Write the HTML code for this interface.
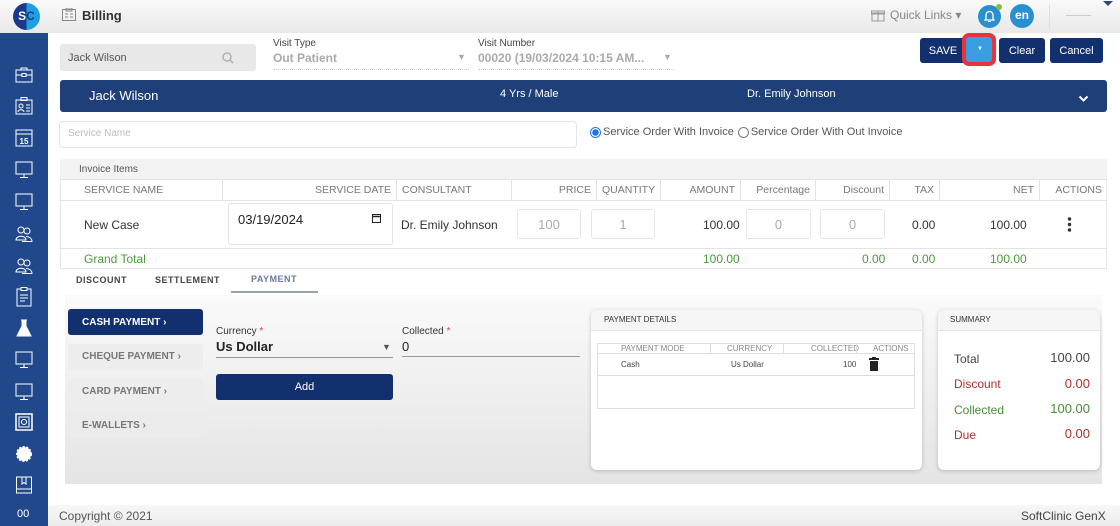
<!DOCTYPE html>
<html><head><meta charset="utf-8">
<style>
*{box-sizing:border-box;margin:0;padding:0}
body{width:1120px;height:526px;overflow:hidden;background:#fff;font-family:"Liberation Sans",sans-serif;position:relative;color:#333}
.a{position:absolute}
.t{position:absolute;white-space:nowrap}
.btn{position:absolute;background:#13306e;color:#fff;font-size:11px;border-radius:3px;display:flex;align-items:center;justify-content:center}
.inp{position:absolute;border:1px solid #e6e6e6;border-radius:3px;background:#fff;color:#aaa;font-size:13px;display:flex;align-items:center;justify-content:center}
.th{position:absolute;top:180px;height:20px;font-size:10.5px;color:#777;line-height:20px;border-right:1px solid #e3e3e3;padding:0 5px;overflow:hidden}
.side svg{position:absolute;left:15px}
</style></head><body>
<div class="a" style="left:0;top:0;width:1120px;height:33px;background:linear-gradient(#fafafa,#e8e8e8)"></div>
<div class="a" style="left:13px;top:3px;width:27px;height:27px;border-radius:50%;background:linear-gradient(90deg,#1a3a8a 50%,#1ea0e0 50%);color:#fff;font-weight:bold;font-size:12px;text-align:center;line-height:27px"><span style="color:#fff">S</span><span style="color:#1a3a8a">C</span></div>
<svg class="a" style="left:62px;top:8px" width="14" height="13" viewBox="0 0 14 13"><rect x="0.5" y="1.5" width="13" height="11" fill="none" stroke="#888"/><rect x="4" y="0" width="6" height="3" fill="none" stroke="#888"/><path d="M3 6h3M3 9h3M8 6h3M8 9h3" stroke="#888"/></svg>
<div class="t" style="left:82px;top:8px;font-size:13px;font-weight:bold;color:#333">Billing</div>
<svg class="a" style="left:871px;top:8px" width="14" height="14" viewBox="0 0 14 14"><rect x="1" y="5" width="12" height="8" fill="none" stroke="#999"/><rect x="0.5" y="3" width="13" height="3" fill="none" stroke="#999"/><path d="M7 3v10" stroke="#999"/></svg>
<div class="t" style="left:890px;top:8px;font-size:12px;color:#888">Quick Links ▾</div>
<div class="a" style="left:978px;top:5px;width:23px;height:23px;border-radius:50%;background:#2a8fd0"></div>
<svg class="a" style="left:984px;top:10px" width="11" height="13" viewBox="0 0 11 13"><path d="M2 9V5a3.5 3.5 0 0 1 7 0v4l1 1H1z" fill="none" stroke="#fff" stroke-width="1.3"/><path d="M4 11.5h3" stroke="#fff"/></svg>
<div class="a" style="left:996px;top:4px;width:6px;height:6px;border-radius:50%;background:#7ac143"></div>
<div class="a" style="left:1010px;top:4px;width:24px;height:24px;border-radius:50%;background:#2a8fd0;color:#fff;font-size:12px;font-weight:bold;text-align:center;line-height:23px">en</div>
<div class="a" style="left:1049px;top:5px;width:1px;height:23px;background:#ddd"></div>
<div class="a" style="left:1066px;top:15px;width:25px;height:1px;background:#ccc"></div>
<div class="a" style="left:1103px;top:1px;width:0;height:0;border-left:5px solid transparent;border-right:5px solid transparent;border-top:5px solid #2b4a80"></div>
<div class="a side" style="left:0;top:33px;width:48px;height:493px;background:#22488c">
<svg style="top:34px" width="18" height="16" viewBox="0 0 18 16"><rect x="1" y="3" width="16" height="12" fill="none" stroke="#fff"/><path d="M6 3V1h6v2M1 8h16" stroke="#fff" fill="none"/><rect x="7" y="6.5" width="4" height="3" fill="#22488c" stroke="#fff"/></svg>
<svg style="top:64px" width="18" height="18" viewBox="0 0 18 18"><rect x="1" y="3" width="16" height="14" fill="none" stroke="#fff"/><rect x="6" y="0.5" width="6" height="3" fill="none" stroke="#fff"/><circle cx="6" cy="9" r="2" fill="none" stroke="#fff"/><path d="M3 15c0-3 6-3 6 0M11 8h4M11 11h4M11 14h4" stroke="#fff" fill="none"/></svg>
<svg style="top:96px" width="18" height="18" viewBox="0 0 18 18"><rect x="1" y="1" width="16" height="16" fill="none" stroke="#fff"/><path d="M1 5h16" stroke="#fff"/><text x="9" y="15" fill="#fff" font-size="8" text-anchor="middle" font-family="Liberation Sans" font-weight="bold">15</text></svg>
<svg style="top:128px" width="18" height="18" viewBox="0 0 18 18"><rect x="1" y="1" width="16" height="12" fill="none" stroke="#fff"/><path d="M9 13v3M5 16.5h8" stroke="#fff"/></svg>
<svg style="top:160px" width="18" height="18" viewBox="0 0 18 18"><rect x="1" y="1" width="16" height="12" fill="none" stroke="#fff"/><path d="M9 13v3M5 16.5h8" stroke="#fff"/></svg>
<svg style="top:192px" width="18" height="18" viewBox="0 0 18 18"><circle cx="6" cy="5" r="3" fill="none" stroke="#fff"/><circle cx="12" cy="6" r="3" fill="none" stroke="#fff"/><path d="M1 15c0-5 10-5 10 0zM7 16.5h10c0-4-4-5-6-5" fill="none" stroke="#fff"/></svg>
<svg style="top:224px" width="18" height="18" viewBox="0 0 18 18"><circle cx="6" cy="5" r="3" fill="none" stroke="#fff"/><circle cx="12" cy="6" r="3" fill="none" stroke="#fff"/><path d="M1 15c0-5 10-5 10 0zM7 16.5h10c0-4-4-5-6-5" fill="none" stroke="#fff"/></svg>
<svg style="top:254px" width="18" height="20" viewBox="0 0 18 20"><rect x="2" y="2" width="14" height="17" fill="none" stroke="#fff"/><rect x="6" y="0.5" width="6" height="3" fill="#22488c" stroke="#fff"/><path d="M5 8h8M5 11h8M5 14h5" stroke="#fff"/></svg>
<svg style="top:286px" width="18" height="18" viewBox="0 0 18 18"><path d="M6 1h6M7 1v6L2 17h14L11 7V1" fill="#fff" stroke="#fff"/></svg>
<svg style="top:318px" width="18" height="18" viewBox="0 0 18 18"><rect x="1" y="1" width="16" height="12" fill="none" stroke="#fff"/><path d="M9 13v3M5 16.5h8" stroke="#fff"/></svg>
<svg style="top:350px" width="18" height="18" viewBox="0 0 18 18"><rect x="1" y="1" width="16" height="12" fill="none" stroke="#fff"/><path d="M9 13v3M5 16.5h8" stroke="#fff"/></svg>
<svg style="top:380px" width="18" height="18" viewBox="0 0 18 18"><rect x="1" y="1" width="16" height="16" fill="none" stroke="#fff" stroke-width="1.5"/><rect x="4" y="4" width="10" height="10" fill="none" stroke="#fff"/><circle cx="9" cy="9" r="2.5" fill="none" stroke="#fff"/></svg>
<svg style="top:412px" width="18" height="18" viewBox="0 0 18 18"><circle cx="9" cy="9" r="7" fill="#fff" stroke="#fff" stroke-width="2" stroke-dasharray="2 1.5"/></svg>
<svg style="top:443px" width="18" height="18" viewBox="0 0 18 18"><rect x="1.5" y="1" width="15" height="16" fill="none" stroke="#fff"/><path d="M1.5 13h15M7 1v7l2-1.5 2 1.5V1" fill="none" stroke="#fff"/></svg>
<div class="t" style="left:17px;top:475px;color:#fff;font-size:11px">00</div>
</div>
<div class="a" style="left:60px;top:44px;width:196px;height:27px;background:#e8e8e8;border-radius:3px"></div>
<div class="t" style="left:68px;top:52px;font-size:11px;color:#555">Jack Wilson</div>
<svg class="a" style="left:222px;top:52px" width="12" height="12" viewBox="0 0 12 12"><circle cx="5" cy="5" r="4" fill="none" stroke="#aaa" stroke-width="1.3"/><path d="M8 8l3 3" stroke="#aaa" stroke-width="1.3"/></svg>
<div class="t" style="left:273px;top:38px;font-size:10px;color:#444">Visit Type</div>
<div class="t" style="left:273px;top:51px;font-size:12px;font-weight:bold;color:#aaa">Out Patient</div>
<div class="t" style="left:457px;top:52px;font-size:9px;color:#aaa">▼</div>
<div class="a" style="left:273px;top:69px;width:196px;border-top:1px dotted #ccc"></div>
<div class="t" style="left:478px;top:38px;font-size:10px;color:#444">Visit Number</div>
<div class="t" style="left:478px;top:51px;font-size:12px;font-weight:bold;color:#aaa">00020 (19/03/2024 10:15 AM...</div>
<div class="t" style="left:663px;top:52px;font-size:9px;color:#aaa">▼</div>
<div class="a" style="left:478px;top:69px;width:196px;border-top:1px dotted #ccc"></div>
<div class="btn" style="left:920px;top:38px;width:46px;height:25px">SAVE</div>
<div class="a" style="left:962px;top:33px;width:34px;height:33px;border:4px solid #e8333a;border-radius:7px;background:#3a9de0"></div>
<div class="t" style="left:977px;top:46px;font-size:6px;color:#fff">▼</div>
<div class="btn" style="left:999px;top:38px;width:46px;height:25px">Clear</div>
<div class="btn" style="left:1050px;top:38px;width:53px;height:25px">Cancel</div>
<div class="a" style="left:60px;top:80px;width:1047px;height:32px;background:#1f3f78;border-radius:3px"></div>
<div class="t" style="left:89px;top:88px;font-size:13px;color:#fff">Jack Wilson</div>
<div class="t" style="left:500px;top:88px;font-size:11px;color:#fff">4 Yrs / Male</div>
<div class="t" style="left:747px;top:88px;font-size:11px;color:#fff">Dr. Emily Johnson</div>
<svg class="a" style="left:1078px;top:95px" width="11" height="8" viewBox="0 0 11 8"><path d="M1.5 1.5l4 4 4-4" fill="none" stroke="#fff" stroke-width="2"/></svg>
<div class="a" style="left:59px;top:121px;width:518px;height:27px;border:1px solid #e3e3e3;border-radius:4px"></div>
<div class="t" style="left:68px;top:128px;font-size:10px;color:#bbb">Service Name</div>
<div class="t" style="left:590px;top:126px;font-size:11px;color:#555;display:flex;align-items:center;gap:2px">
<span style="display:inline-block;width:11px;height:11px;border-radius:50%;border:1px solid #1a73e8;background:radial-gradient(#1a73e8 3px,#fff 3.5px)"></span>Service Order With Invoice
<span style="display:inline-block;width:11px;height:11px;border-radius:50%;border:1px solid #777;margin-left:2px"></span>Service Order With Out Invoice</div>
<div class="a" style="left:60px;top:159px;width:1047px;height:110px;border:1px solid #e6e6e6"></div>
<div class="a" style="left:60px;top:159px;width:1047px;height:21px;background:#f3f3f3;border-bottom:1px solid #e3e3e3"></div>
<div class="t" style="left:79px;top:164px;font-size:10px;color:#555">Invoice Items</div>
<div class="a" style="left:60px;top:200px;width:1047px;border-top:1px solid #e3e3e3"></div>
<div class="a" style="left:60px;top:248px;width:1047px;border-top:1px solid #e3e3e3"></div>
<div class="th" style="left:60px;width:163px;padding-left:24px">SERVICE NAME</div>
<div class="th" style="left:223px;width:174px;text-align:right">SERVICE DATE</div>
<div class="th" style="left:397px;width:115px">CONSULTANT</div>
<div class="th" style="left:512px;width:85px;text-align:right">PRICE</div>
<div class="th" style="left:597px;width:64px;text-align:right">QUANTITY</div>
<div class="th" style="left:661px;width:80px;text-align:right">AMOUNT</div>
<div class="th" style="left:741px;width:75px;text-align:right">Percentage</div>
<div class="th" style="left:816px;width:74px;text-align:right">Discount</div>
<div class="th" style="left:890px;width:50px;text-align:right">TAX</div>
<div class="th" style="left:940px;width:100px;text-align:right">NET</div>
<div class="th" style="left:1040px;width:67px;border-right:none;text-align:right">ACTIONS</div>
<div class="t" style="left:84px;top:218px;font-size:12px;color:#333">New Case</div>
<div class="a" style="left:228px;top:203px;width:165px;height:42px;border:1px solid #e3e3e3;border-radius:3px"></div>
<div class="t" style="left:238px;top:212px;font-size:13px;color:#222">03/19/2024</div>
<svg class="a" style="left:372px;top:214px" width="9" height="9" viewBox="0 0 9 9"><rect x="0.5" y="0.5" width="8" height="8" fill="none" stroke="#222"/><path d="M0.5 2.5h8" stroke="#222" stroke-width="1.5"/></svg>
<div class="t" style="left:401px;top:218px;font-size:12px;color:#333">Dr. Emily Johnson</div>
<div class="inp" style="left:517px;top:209px;width:64px;height:30px">100</div>
<div class="inp" style="left:591px;top:209px;width:64px;height:30px">1</div>
<div class="t" style="left:703px;top:218px;font-size:12px;color:#333">100.00</div>
<div class="inp" style="left:746px;top:209px;width:65px;height:30px">0</div>
<div class="inp" style="left:820px;top:209px;width:65px;height:30px">0</div>
<div class="t" style="left:912px;top:218px;font-size:12px;color:#333">0.00</div>
<div class="t" style="left:990px;top:218px;font-size:12px;color:#333">100.00</div>
<svg class="a" style="left:1067px;top:217px" width="5" height="15" viewBox="0 0 5 15"><circle cx="2.5" cy="2" r="1.7" fill="#333"/><circle cx="2.5" cy="7.5" r="1.7" fill="#333"/><circle cx="2.5" cy="13" r="1.7" fill="#333"/></svg>
<div class="t" style="left:84px;top:252px;font-size:12px;color:#4a9a3a">Grand Total</div>
<div class="t" style="left:703px;top:252px;font-size:12px;color:#4a9a3a">100.00</div>
<div class="t" style="left:862px;top:252px;font-size:12px;color:#4a9a3a">0.00</div>
<div class="t" style="left:912px;top:252px;font-size:12px;color:#4a9a3a">0.00</div>
<div class="t" style="left:990px;top:252px;font-size:12px;color:#4a9a3a">100.00</div>
<div class="t" style="left:76px;top:275px;font-size:9px;font-weight:bold;color:#444;letter-spacing:.5px">DISCOUNT</div>
<div class="t" style="left:155px;top:275px;font-size:9px;font-weight:bold;color:#444;letter-spacing:.5px">SETTLEMENT</div>
<div class="t" style="left:251px;top:274px;font-size:9px;font-weight:bold;color:#6a7aa0;letter-spacing:.5px">PAYMENT</div>
<div class="a" style="left:231px;top:291px;width:87px;height:2px;background:#98a4b8"></div>
<div class="a" style="left:65px;top:295px;width:1037px;height:189px;background:linear-gradient(#fafafa,#e4e4e4)"></div>
<div class="btn" style="left:68px;top:309px;width:135px;height:26px;font-weight:bold;font-size:10px;justify-content:flex-start;padding-left:14px">CASH PAYMENT ›</div>
<div class="a" style="left:68px;top:344px;width:135px;height:26px;background:#ededed;border-radius:3px"></div>
<div class="t" style="left:82px;top:351px;font-size:10px;font-weight:bold;color:#777">CHEQUE PAYMENT ›</div>
<div class="a" style="left:68px;top:378px;width:135px;height:26px;background:#ededed;border-radius:3px"></div>
<div class="t" style="left:82px;top:386px;font-size:10px;font-weight:bold;color:#777">CARD PAYMENT ›</div>
<div class="a" style="left:68px;top:412px;width:135px;height:26px;background:#ebebeb;border-radius:3px"></div>
<div class="t" style="left:82px;top:420px;font-size:10px;font-weight:bold;color:#777">E-WALLETS ›</div>
<div class="t" style="left:216px;top:326px;font-size:10px;color:#333">Currency <span style="color:#e33">*</span></div>
<div class="t" style="left:216px;top:339px;font-size:13px;font-weight:bold;color:#222">Us Dollar</div>
<div class="t" style="left:382px;top:342px;font-size:9px;color:#555">▼</div>
<div class="a" style="left:216px;top:357px;width:177px;border-top:1px solid #999"></div>
<div class="t" style="left:402px;top:326px;font-size:10px;color:#333">Collected <span style="color:#e33">*</span></div>
<div class="t" style="left:402px;top:339px;font-size:13px;color:#222">0</div>
<div class="a" style="left:402px;top:356px;width:178px;border-top:1px solid #999"></div>
<div class="btn" style="left:216px;top:374px;width:177px;height:26px">Add</div>
<div class="a" style="left:591px;top:310px;width:331px;height:160px;background:#fff;border-radius:6px;box-shadow:0 1px 4px rgba(0,0,0,.2);overflow:hidden">
<div style="height:21px;background:#f5f5f5;border-bottom:1px solid #e6e6e6;font-size:8px;color:#333;padding:5px 13px">PAYMENT DETAILS</div>
<div class="a" style="left:6px;top:33px;width:318px;height:66px;border:1px solid #ddd"></div>
<div class="a" style="left:6px;top:33px;width:318px;height:11px;border-bottom:1px solid #ddd"></div>
<div class="t" style="left:30px;top:34px;font-size:8px;color:#888">PAYMENT MODE</div>
<div class="a" style="left:119px;top:33px;height:11px;border-left:1px solid #ddd"></div>
<div class="t" style="left:136px;top:34px;font-size:8px;color:#888">CURRENCY</div>
<div class="a" style="left:192px;top:33px;height:11px;border-left:1px solid #ddd"></div>
<div class="t" style="left:220px;top:34px;font-size:8px;color:#888">COLLECTED</div>
<div class="a" style="left:265px;top:33px;height:11px;border-left:1px solid #ddd"></div>
<div class="t" style="left:282px;top:34px;font-size:8px;color:#888">ACTIONS</div>
<div class="t" style="left:30px;top:50px;font-size:8px;color:#444">Cash</div>
<div class="t" style="left:140px;top:50px;font-size:8px;color:#444">Us Dollar</div>
<div class="t" style="left:252px;top:50px;font-size:8px;color:#444">100</div>
<svg class="a" style="left:278px;top:47px" width="10" height="14" viewBox="0 0 10 14"><rect x="0" y="1" width="10" height="2" fill="#222"/><rect x="3" y="0" width="4" height="2" fill="#222"/><rect x="1" y="4" width="8" height="10" fill="#222"/></svg>
<div class="a" style="left:6px;top:65px;width:318px;border-top:1px solid #ddd"></div>
</div>
<div class="a" style="left:938px;top:310px;width:162px;height:160px;background:#fff;border-radius:6px;box-shadow:0 1px 4px rgba(0,0,0,.2);overflow:hidden">
<div style="height:21px;background:#f5f5f5;border-bottom:1px solid #e6e6e6;font-size:8px;color:#333;padding:5px 12px">SUMMARY</div>
<div class="t" style="left:16px;top:42px;font-size:12px;color:#444">Total</div>
<div class="t" style="right:10px;top:40px;font-size:13px;color:#444">100.00</div>
<div class="t" style="left:16px;top:67px;font-size:12px;color:#b03030">Discount</div>
<div class="t" style="right:10px;top:66px;font-size:13px;color:#b03030">0.00</div>
<div class="t" style="left:16px;top:93px;font-size:12px;color:#4a8a3a">Collected</div>
<div class="t" style="right:10px;top:91px;font-size:13px;color:#4a8a3a">100.00</div>
<div class="t" style="left:16px;top:118px;font-size:12px;color:#b03030">Due</div>
<div class="t" style="right:10px;top:116px;font-size:13px;color:#b03030">0.00</div>
</div>
<div class="a" style="left:48px;top:505px;width:1072px;height:21px;background:linear-gradient(#f7f7f7,#ececec)"></div>
<div class="t" style="left:59px;top:509px;font-size:12px;color:#555">Copyright © 2021</div>
<div class="t" style="left:1021px;top:509px;font-size:12px;color:#444">SoftClinic GenX</div>
</body></html>
